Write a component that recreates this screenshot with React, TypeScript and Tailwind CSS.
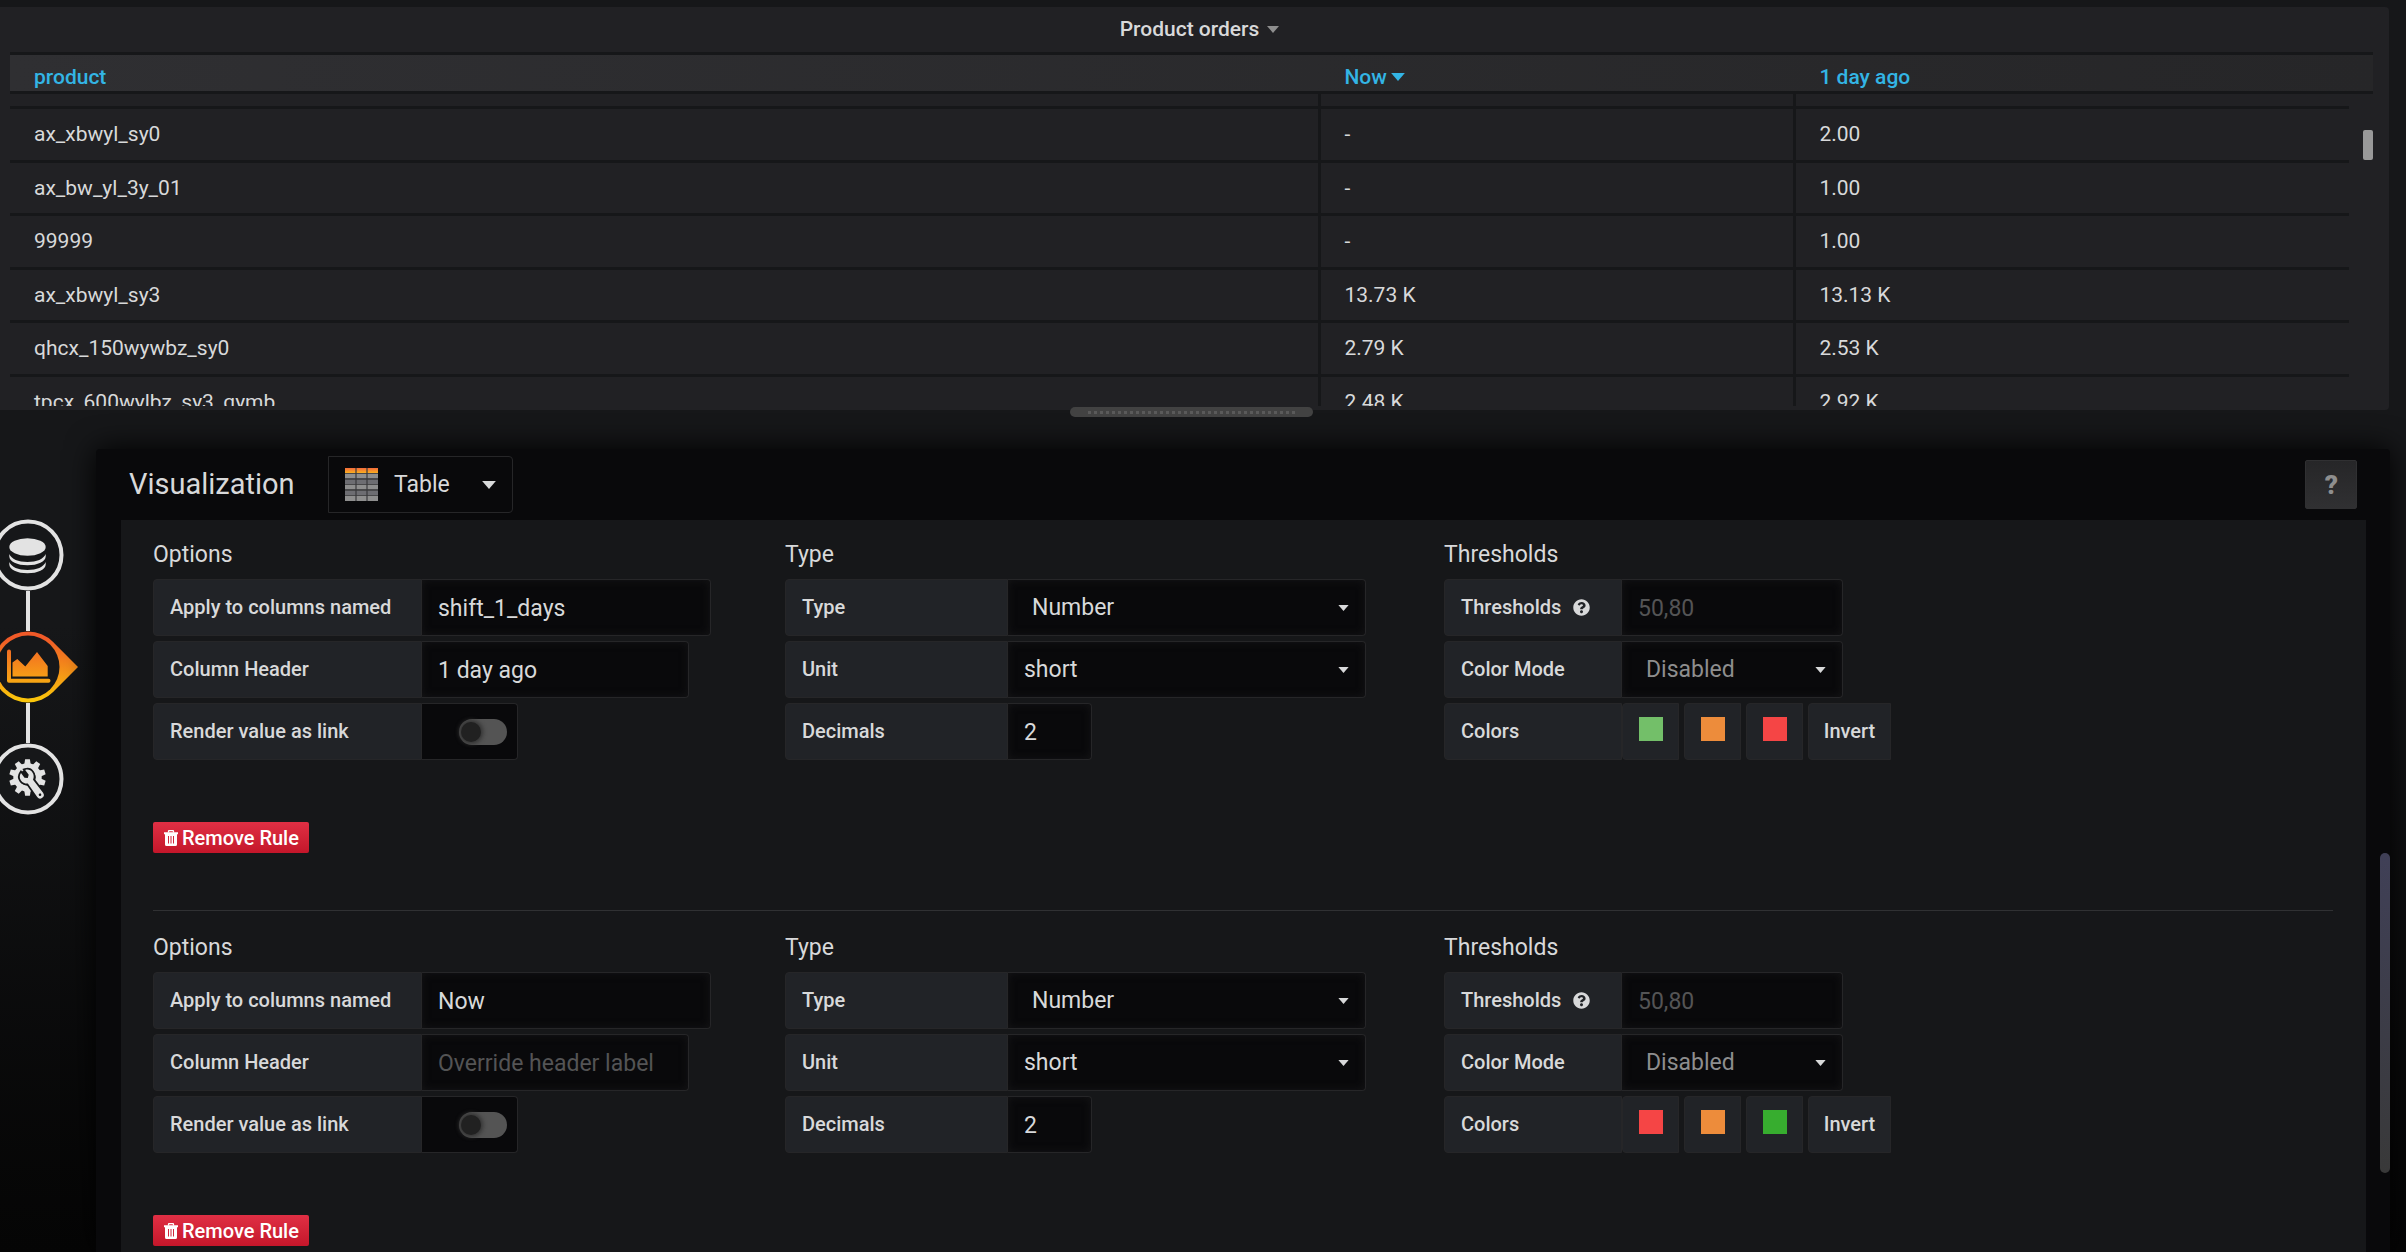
import { useId, useState } from "react";
import type { ReactNode } from "react";
import { FaQuestionCircle } from "react-icons/fa";

interface Row {
    product: string;
    now: string;
    ago: string;
}

interface Rule {
    pattern: string;
    header: string;
    decimals: string;
    colors: string[];
}

const rows: Row[] = [
    { product: "ax_xbwyl_sy0", now: "-", ago: "2.00" },
    { product: "ax_bw_yl_3y_01", now: "-", ago: "1.00" },
    { product: "99999", now: "-", ago: "1.00" },
    { product: "ax_xbwyl_sy3", now: "13.73 K", ago: "13.13 K" },
    { product: "qhcx_150wywbz_sy0", now: "2.79 K", ago: "2.53 K" },
    { product: "tpcx_600wylbz_sy3_gymb", now: "2.48 K", ago: "2.92 K" },
];

const rules: Rule[] = [
    { pattern: "shift_1_days", header: "1 day ago", decimals: "2", colors: ["#73bf69", "#ed8c3b", "#f54545"] },
    { pattern: "Now", header: "", decimals: "2", colors: ["#f54545", "#ed8c3b", "#37ad2f"] },
];

const labelClass = "flex h-[57px] shrink-0 items-center rounded-l-[4px] border border-[#262628] bg-[#212327] px-4 pb-px text-[20px] font-medium";
const inputClass = "h-[57px] rounded-r-[4px] border border-l-0 border-[#262628] bg-[#09090b] px-4 pt-[2px] text-[23px] text-[#d8d9da] shadow-[inset_0_0_8px_#151517] outline-none placeholder:text-[#545455]";

const Caret = ({ className }: { className: string }) => (
    <svg viewBox="0 0 12 7" className={className} aria-hidden="true">
        <path d="M0 0H12L6 7Z" fill="currentColor" />
    </svg>
);

const ProductTable = () => (
    <section className="relative mt-[7px] mr-[17px] flex h-[403px] shrink-0 flex-col rounded-r-[4px] bg-[#212124] pr-4 pl-[10px]">
        <header className="flex h-[45px] shrink-0 items-center justify-center pr-1">
            <button className="-mr-5 flex items-center gap-2 text-[21px] font-medium">
                Product orders
                <Caret className="h-[7px] w-3 text-[#8e8e8e]" />
            </button>
        </header>
        <div className="h-[354px] overflow-hidden">
            <table className="w-full table-fixed border-separate border-spacing-0 text-left text-[21px]">
                <colgroup>
                    <col className="w-[55.5%]" />
                    <col className="w-[20.1%]" />
                    <col />
                    <col className="w-6" />
                </colgroup>
                <thead>
                    <tr className="h-[42px] bg-linear-to-r from-[#2f2f32] to-[#262628] text-[#33b5e5] *:border-y-[3px] *:border-[#161719] *:p-0 *:pt-2 *:pl-[23px] *:font-medium *:leading-7 *:first:pl-6">
                        <th>product</th>
                        <th>
                            <button className="flex items-center gap-1">
                                Now
                                <Caret className="h-2 w-[14px]" />
                            </button>
                        </th>
                        <th>1 day ago</th>
                        <th />
                    </tr>
                </thead>
                <tbody>
                    <tr className="*:h-[15px] *:border-b-[3px] *:border-[#161719] *:p-0">
                        <td className="border-r-[3px]" />
                        <td className="border-r-[3px]" />
                        <td />
                        <td className="border-b-0!" />
                    </tr>
                    {rows.map((row) => (
                        <tr
                            key={row.product}
                            className="*:border-b-[3px] *:border-[#161719] *:p-0 *:pt-px *:pl-[23px] *:first:pl-6 odd:*:h-[53px] even:*:h-[54px]"
                        >
                            <td className="border-r-[3px]">{row.product}</td>
                            <td className="border-r-[3px]">{row.now}</td>
                            <td>{row.ago}</td>
                            <td className="border-b-0!" />
                        </tr>
                    ))}
                </tbody>
            </table>
        </div>
        <div className="absolute top-[123px] right-4 h-[30px] w-[10px] rounded-[2px] bg-[#999999]" />
        <div className="absolute -bottom-[7px] left-[1070px] z-10 flex h-[10px] w-[243px] items-center justify-center rounded-full bg-[#424242]">
            <span className="w-[207px] border-t-[3px] border-dotted border-[#5a5a5a]" />
        </div>
    </section>
);

const teeth = [0, 36, 72, 108, 144, 180, 216, 252, 288, 324];

const EditorTabs = () => (
    <nav className="-ml-2 flex w-[88px] flex-col" aria-label="Panel editor">
        <button aria-label="Queries">
            <svg viewBox="0 0 88 72" className="block h-[72px] w-[88px]">
                <circle cx="36" cy="36" r="33.5" fill="#161719" stroke="#e3e3e3" strokeWidth="4" />
                <g fill="#e3e3e3">
                    <ellipse cx="35.5" cy="28" rx="18.2" ry="8.8" />
                    <path d="M17.3 35c2 5 9 8 18.200 8s16.200-3 18.200-8v2.500c0 5-8 8.800-18.200 8.800s-18.200-3.800-18.200-8.800z" />
                    <path d="M17.3 43c2 5 9 8 18.200 8s16.200-3 18.200-8v2.500c0 5-8 8.800-18.200 8.800s-18.200-3.800-18.200-8.800z" />
                </g>
            </svg>
        </button>
        <span className="ml-[34px] h-10 w-1 bg-[#e3e3e3]" />
        <button aria-label="Visualization">
            <svg viewBox="0 0 88 72" className="block h-[72px] w-[88px]">
                <defs>
                    <linearGradient id="active" gradientUnits="userSpaceOnUse" x1="0" y1="0" x2="0" y2="72">
                        <stop offset="0.1" stopColor="#f05a28" />
                        <stop offset="1" stopColor="#fbca0a" />
                    </linearGradient>
                </defs>
                <path d="M61.100 10.900L86 36L61.100 61.100A35.500 35.500 0 1 1 61.100 10.900Z" fill="url(#active)" />
                <circle cx="36" cy="36" r="31.5" fill="#161719" />
                <g fill="url(#active)">
                    <path d="M20.500 31.500l4.800-3.500 8 7.500 11.700-14.500 10.700 14v10.500H20.500z" />
                    <path d="M17 20.500v29.200h39.500" fill="none" stroke="url(#active)" strokeWidth="4" strokeLinecap="round" strokeLinejoin="round" />
                </g>
            </svg>
        </button>
        <span className="ml-[34px] h-10 w-1 bg-[#e3e3e3]" />
        <button aria-label="General">
            <svg viewBox="0 0 88 72" className="block h-[72px] w-[88px]">
                <circle cx="36" cy="36" r="33.5" fill="#161719" stroke="#e3e3e3" strokeWidth="4" />
                <g transform="translate(35.500 34.500)">
                    <circle r="11.200" fill="none" stroke="#e3e3e3" strokeWidth="6" />
                    {teeth.map((deg) => (
                        <path key={deg} d="M-3.200 -13L-2.400 -18.300H2.400L3.200 -13Z" fill="#e3e3e3" transform={`rotate(${deg})`} />
                    ))}
                    <g transform="rotate(-36)">
                        <path
                            d="M-2.600 -7.500V-1.500L0 0.500L2.600 -1.500V-7.500C5.500 -6.500 7 -4 7 -1.500C7 1.500 5.500 3.600 3.200 5L3.600 21.500A3.600 3.600 0 0 1 -3.600 21.500L-3.200 5C-5.500 3.600 -7 1.500 -7 -1.500C-7 -4 -5.500 -6.500 -2.600 -7.500Z"
                            fill="#e3e3e3"
                            stroke="#161719"
                            strokeWidth="3.500"
                            paintOrder="stroke"
                        />
                        <circle cy="21.300" r="1.300" fill="#161719" />
                    </g>
                </g>
            </svg>
        </button>
    </nav>
);

const TableIcon = () => (
    <svg viewBox="0 0 33 33" className="size-[33px]" aria-hidden="true">
        <defs>
            <linearGradient id="head" x1="0" y1="0" x2="0" y2="1">
                <stop offset="0" stopColor="#f2693c" />
                <stop offset="1" stopColor="#fbb11e" />
            </linearGradient>
        </defs>
        <rect width="33" height="33" fill="#48484a" />
        <rect width="33" height="5" fill="url(#head)" />
        <path d="M0 6h33v4H0zM0 17h33v4H0zM0 28h33v5H0z" fill="#8e8e8e" />
        <path d="M0 12h33v4H0zM0 23h33v4H0z" fill="#6d6d72" />
        <path d="M11 0v33M22 0v33" stroke="#3a3a3c" strokeOpacity="0.8" strokeWidth="1.500" />
    </svg>
);

const TrashIcon = () => (
    <svg viewBox="0 0 14 16" className="h-4 w-[14px]" aria-hidden="true">
        <path d="M4.500 2.500V1.500a1 1 0 0 1 1-1h3a1 1 0 0 1 1 1v1" fill="none" stroke="#fff" strokeWidth="1.300" />
        <path d="M0 2.300h14v2H0zM1 4.300h12V14.500a1.500 1.500 0 0 1-1.500 1.500h-9A1.500 1.500 0 0 1 1 14.500z" fill="#fff" />
        <path d="M4.500 6v7.500M7 6v7.500M9.500 6v7.500" stroke="#d0253a" />
    </svg>
);

const Field = ({ label, width, children }: { label: string; width: string; children: (id: string) => ReactNode }) => {
    const id = useId();
    return (
        <div className="flex">
            <label htmlFor={id} className={`${labelClass} ${width}`}>
                {label}
                {label === "Thresholds" && <FaQuestionCircle className="ml-3 size-[17px]" />}
            </label>
            {children(id)}
        </div>
    );
};

const Select = ({ id, value, className }: { id: string; value: string; className: string }) => (
    <div className="relative">
        <select id={id} defaultValue={value} className={`${inputClass} appearance-none ${className}`}>
            <option>{value}</option>
        </select>
        <Caret className="pointer-events-none absolute top-[26px] right-[17px] h-[6px] w-[11px]" />
    </div>
);

const Group = ({ title, className, children }: { title: string; className?: string; children: ReactNode }) => (
    <section className={className}>
        <h3 className="mb-[9px] text-[23px] leading-[30px]">{title}</h3>
        <div className="flex flex-col gap-[5px]">{children}</div>
    </section>
);

const ColumnRule = ({ rule, onInvert }: { rule: Rule; onInvert: () => void }) => (
    <div>
        <div className="flex">
            <Group title="Options" className="w-[632px]">
                <Field label="Apply to columns named" width="w-[269px]">
                    {(id) => <input id={id} defaultValue={rule.pattern} className={`${inputClass} w-[289px]`} />}
                </Field>
                <Field label="Column Header" width="w-[269px]">
                    {(id) => (
                        <input
                            id={id}
                            defaultValue={rule.header}
                            placeholder="Override header label"
                            className={`${inputClass} w-[267px]`}
                        />
                    )}
                </Field>
                <Field label="Render value as link" width="w-[269px]">
                    {(id) => (
                        <div className="flex h-[57px] w-24 items-center justify-end rounded-r-[4px] border border-l-0 border-[#262628] bg-[#09090b] pr-[10px]">
                            <input
                                id={id}
                                type="checkbox"
                                className="flex h-[26px] w-12 appearance-none items-center rounded-full bg-[#545454] pl-[2px] before:size-5 before:rounded-full before:bg-[#212121] before:shadow-[0_0_4px_2px_#333333] checked:justify-end checked:pr-[2px]"
                            />
                        </div>
                    )}
                </Field>
            </Group>
            <Group title="Type" className="w-[659px]">
                <Field label="Type" width="w-[223px]">
                    {(id) => <Select id={id} value="Number" className="w-[358px] pl-6" />}
                </Field>
                <Field label="Unit" width="w-[223px]">
                    {(id) => <Select id={id} value="short" className="w-[358px]" />}
                </Field>
                <Field label="Decimals" width="w-[223px]">
                    {(id) => <input id={id} defaultValue={rule.decimals} className={`${inputClass} w-[84px]`} />}
                </Field>
            </Group>
            <Group title="Thresholds">
                <Field label="Thresholds" width="w-[178px]">
                    {(id) => <input id={id} placeholder="50,80" className={`${inputClass} w-[221px]`} />}
                </Field>
                <Field label="Color Mode" width="w-[178px]">
                    {(id) => <Select id={id} value="Disabled" className="w-[221px] pl-6 text-[#8e8e8e]!" />}
                </Field>
                <div className="flex gap-[5px]">
                    <div className="flex">
                        <span className={`${labelClass} w-[178px]`}>Colors</span>
                        <ColorButton color={rule.colors[0]} />
                    </div>
                    <ColorButton color={rule.colors[1]} />
                    <ColorButton color={rule.colors[2]} />
                    <button onClick={onInvert} className={`${labelClass} w-[83px] justify-center`}>
                        Invert
                    </button>
                </div>
            </Group>
        </div>
        <button className="mt-[62px] flex h-[31px] items-center gap-1 rounded-[2px] bg-linear-to-b from-[#e02f44] to-[#c4162a] pr-[10px] pl-[11px] text-[20px] font-medium text-white">
            <TrashIcon />
            Remove Rule
        </button>
    </div>
);

const ColorButton = ({ color }: { color: string }) => (
    <button
        aria-label={color}
        className="flex h-[57px] w-[57px] justify-center rounded-l-[4px] border border-[#262628] bg-[#212327] pt-[13px]"
    >
        <span className="size-6" style={{ backgroundColor: color }} />
    </button>
);

export default function App() {
    const [items, setItems] = useState(rules);

    const invert = (index: number) => {
        setItems(items.map((item, i) => (i === index ? { ...item, colors: [...item.colors].reverse() } : item)));
    };

    return (
        <div className="flex h-screen flex-col overflow-hidden bg-linear-to-b from-[#161719] from-50% to-[#050505] font-['Roboto',sans-serif] text-[#d8d9da]">
            <ProductTable />
            <div className="flex min-h-0 flex-1 pr-4">
                <div className="w-24 shrink-0 pt-[109px]">
                    <EditorTabs />
                </div>
                <main className="relative mt-[39px] flex min-w-0 flex-1 flex-col rounded-t-[4px] bg-[#09090b] pr-6 pl-[25px] shadow-[0_0_30px_#000000]">
                    <header className="flex h-[71px] shrink-0 items-center pr-[9px] pl-2">
                        <h2 className="w-[199px] text-[29px]">Visualization</h2>
                        <button className="flex h-[57px] w-[185px] items-center rounded-r-[4px] border border-[#262628] px-4 text-[23px]">
                            <TableIcon />
                            <span className="ml-4 flex-1 pt-[2px] text-left">Table</span>
                            <Caret className="h-2 w-[14px]" />
                        </button>
                        <button className="ml-auto h-[49px] w-[52px] rounded-[2px] border border-[#303032] bg-linear-to-b from-[#262628] to-[#303032] pt-px pl-px text-[26px] font-black text-[#8e8e8e]">
                            ?
                        </button>
                    </header>
                    <div className="min-h-0 flex-1 overflow-hidden bg-[#161719] pt-5 pr-[33px] pl-8">
                        {items.map((rule, i) => (
                            <div key={rule.pattern}>
                                {i > 0 && <hr className="mt-[57px] mb-[22px] border-[#303133]" />}
                                <ColumnRule rule={rule} onInvert={() => invert(i)} />
                            </div>
                        ))}
                    </div>
                    <div className="absolute top-[404px] right-0 h-[320px] w-[10px] rounded-full bg-linear-to-b from-[#404057] to-[#393939]" />
                </main>
            </div>
        </div>
    );
}
